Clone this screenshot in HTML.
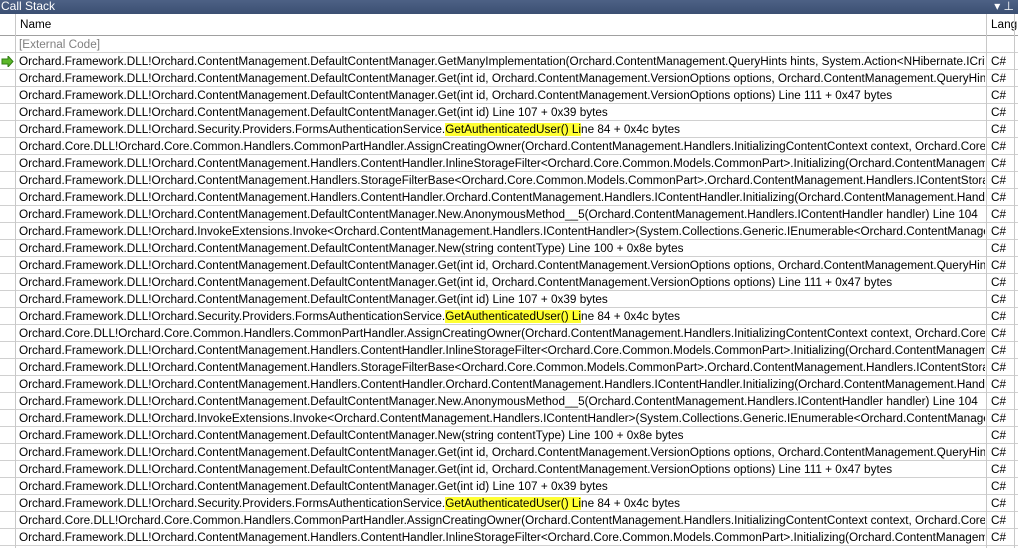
<!DOCTYPE html>
<html><head><meta charset="utf-8"><style>
*{margin:0;padding:0;box-sizing:border-box}
body{width:1018px;height:548px;overflow:hidden;background:#fff;font-family:"Liberation Sans",sans-serif;font-size:11.75px;color:#000;position:relative}
#title{position:absolute;left:0;top:0;width:1018px;height:14px;background:linear-gradient(#4d6185,#3b4f72);color:#fff;font-size:12px;line-height:13px;padding-left:1px}
#hdr{position:absolute;left:0;top:14px;width:1018px;height:22px;background:#fff;border-bottom:1px solid #a0a0a0}
.row{position:absolute;left:0;width:1018px;height:17px;border-bottom:1px solid #d0d0d0;line-height:16px;white-space:nowrap}
.c1{position:absolute;left:19px;top:1px;width:966px;overflow:hidden}
.c2{position:absolute;left:991px;top:1px}
.vl{position:absolute;top:14px;bottom:0;width:1px;background:#c8c8c8}
.hl{background:#ffff33}
</style></head><body>
<div id="title">Call Stack<span style="position:absolute;right:4px;top:0">▾ ⊥</span></div>
<div id="hdr"><span style="position:absolute;left:20px;top:4px">Name</span><span style="position:absolute;left:991px;top:4px">Lang</span></div>
<div id="rows"></div>
<div class="vl" style="left:15px"></div>
<div class="vl" style="left:986px"></div>
<div class="vl" style="left:1014px"></div>
<script>
const D="Orchard.Framework.DLL!Orchard.ContentManagement.";
const seq=[
D+"DefaultContentManager.Get(int id, Orchard.ContentManagement.VersionOptions options, Orchard.ContentManagement.QueryHints hints)",
D+"DefaultContentManager.Get(int id, Orchard.ContentManagement.VersionOptions options) Line 111 + 0x47 bytes",
D+"DefaultContentManager.Get(int id) Line 107 + 0x39 bytes",
"AUTH",
"Orchard.Core.DLL!Orchard.Core.Common.Handlers.CommonPartHandler.AssignCreatingOwner(Orchard.ContentManagement.Handlers.InitializingContentContext context, Orchard.Core",
D+"Handlers.ContentHandler.InlineStorageFilter<Orchard.Core.Common.Models.CommonPart>.Initializing(Orchard.ContentManagement",
D+"Handlers.StorageFilterBase<Orchard.Core.Common.Models.CommonPart>.Orchard.ContentManagement.Handlers.IContentStorageFilter",
D+"Handlers.ContentHandler.Orchard.ContentManagement.Handlers.IContentHandler.Initializing(Orchard.ContentManagement.Handlers",
D+"DefaultContentManager.New.AnonymousMethod__5(Orchard.ContentManagement.Handlers.IContentHandler handler) Line 104",
"Orchard.Framework.DLL!Orchard.InvokeExtensions.Invoke<Orchard.ContentManagement.Handlers.IContentHandler>(System.Collections.Generic.IEnumerable<Orchard.ContentManagement",
D+"DefaultContentManager.New(string contentType) Line 100 + 0x8e bytes"];
let rows=[["[External Code]",""],[D+"DefaultContentManager.GetManyImplementation(Orchard.ContentManagement.QueryHints hints, System.Action<NHibernate.ICriteria>","C#"]];
for(let i=0;i<28&&rows.length<30;i++)rows.push([seq[i%seq.length],"C#"]);
let h="";
rows.forEach((r,i)=>{
 let t=r[0];
 let html;
 if(t==="AUTH")html='Orchard.Framework.DLL!Orchard.Security.Providers.FormsAuthenticationService.<span class="hl">GetAuthenticatedUser() Li</span>ne 84 + 0x4c bytes';
 else html=t.replace(/</g,"&lt;").replace(/>/g,"&gt;");
 const st=i===0?' style="color:#808080"':'';
 const arrow=i===1?'<svg style="position:absolute;left:1px;top:3px" width="13" height="11" viewBox="0 0 13 11"><path d="M1 3h6V0l5 5.5-5 5.5V8H1z" fill="#5cb82a" stroke="#2f7d12" stroke-width="1"/></svg>':'';
 h+=`<div class="row" style="top:${36+i*17}px">${arrow}<span class="c1"${st}>${html}</span><span class="c2">${r[1]}</span></div>`;
});
document.getElementById("rows").innerHTML=h;
</script>
</body></html>
